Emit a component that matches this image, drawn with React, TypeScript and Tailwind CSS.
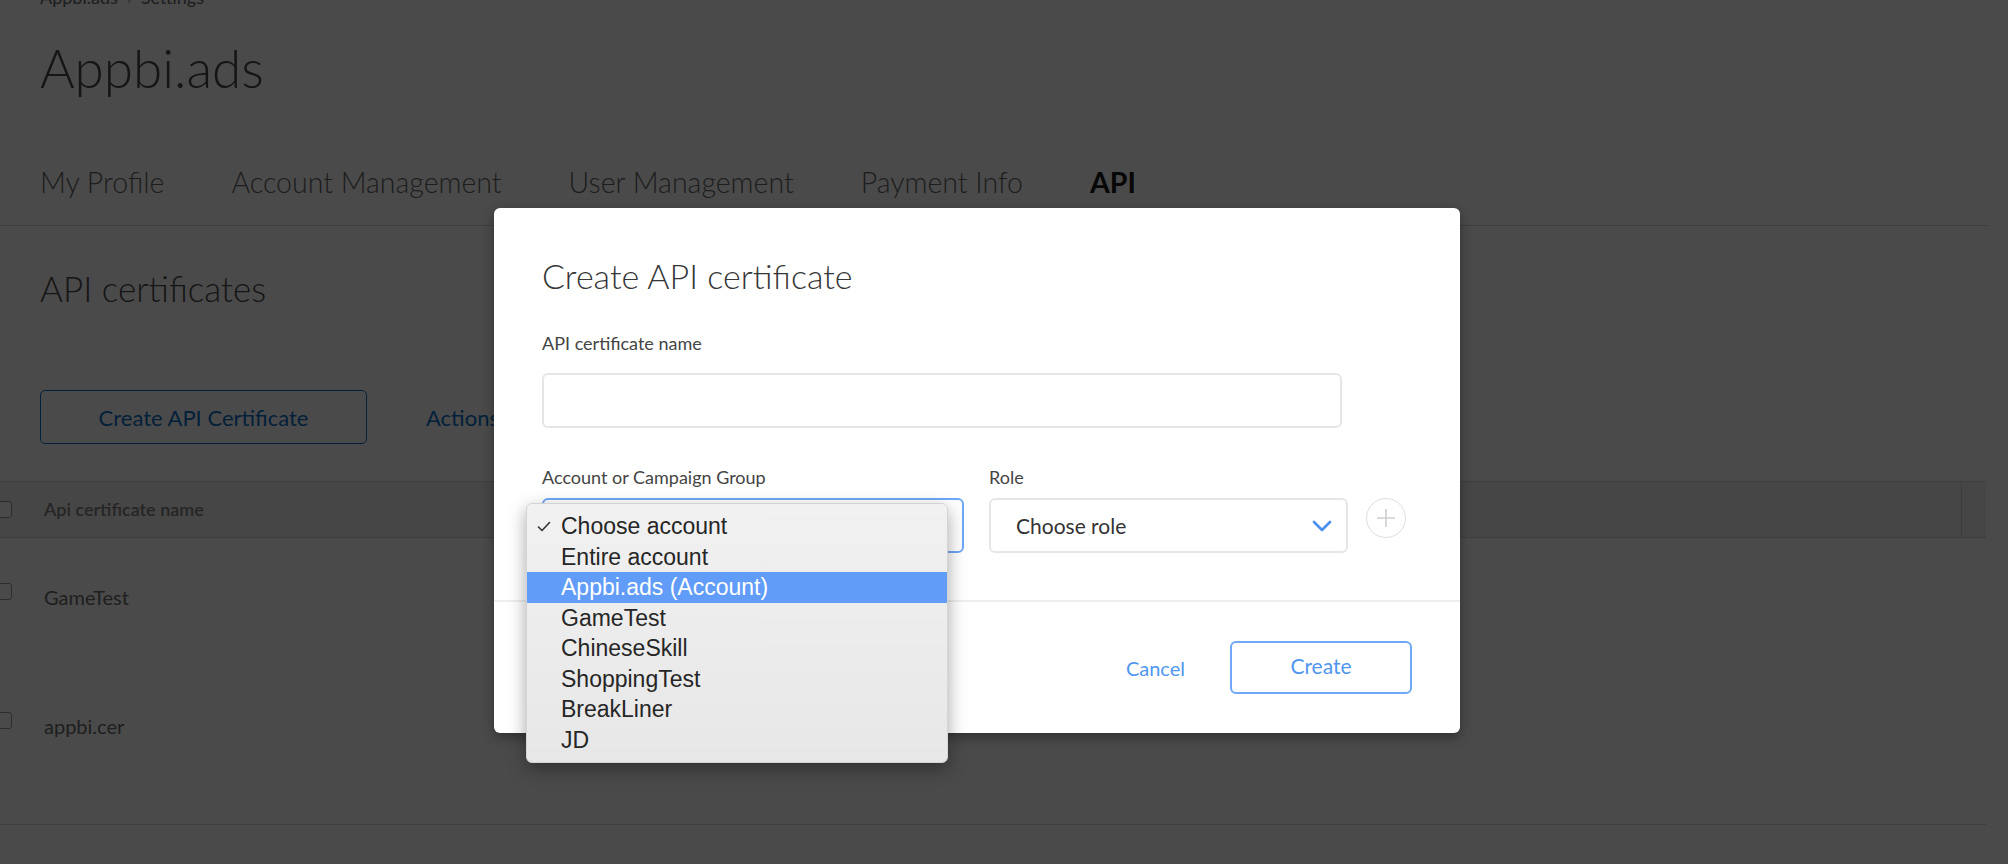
import React from 'react';

const tabs = ['My Profile', 'Account Management', 'User Management', 'Payment Info', 'API'];

const accountOptions = [
  'Choose account',
  'Entire account',
  'Appbi.ads (Account)',
  'GameTest',
  'ChineseSkill',
  'ShoppingTest',
  'BreakLiner',
  'JD',
];

const certificates = [
  { name: 'GameTest', rowClass: 'h-[129px]' },
  { name: 'appbi.cer', rowClass: 'h-[157px]' },
];

const Checkbox: React.FC = () => (
  <span className="block h-[17px] w-[17px] shrink-0 rounded-[3px] border border-[#999] bg-white" />
);

const Chevron: React.FC = () => (
  <svg width="20" height="12" viewBox="0 0 20 12" fill="none">
    <path d="M2 2 L10 10 L18 2" stroke="#4a8ff0" strokeWidth="2.6" strokeLinecap="round" strokeLinejoin="round" />
  </svg>
);

const AccountMenu: React.FC = () => (
  <ul className="absolute left-[-16px] top-[38px] z-10 w-[422px] rounded-[6px] border border-[#d4d4d4] bg-linear-to-b from-[#f1f1f1] to-[#e7e7e7] py-[7px] font-['Liberation_Sans',sans-serif] text-[23px] text-[#262626] shadow-[0_6px_18px_rgba(0,0,0,0.35)]">
    {accountOptions.map((opt, index) => (
      <li
        key={opt}
        className={`relative h-[30.5px] pl-[34px] leading-[30.5px] ${
          index === 2 ? 'bg-[#619cf8] text-white' : ''
        }`}
      >
        {index === 0 && (
          <svg className="absolute left-[10px] top-[10px]" width="14" height="11" viewBox="0 0 14 11" fill="none">
            <path d="M1.5 6 L5 9.5 L12.5 1.5" stroke="#333" strokeWidth="1.6" strokeLinecap="round" strokeLinejoin="round" />
          </svg>
        )}
        {opt}
      </li>
    ))}
  </ul>
);

const CreateCertificateModal: React.FC = () => (
  <div className="absolute left-[494px] top-[208px] z-20 h-[525px] w-[966px] rounded-[6px] bg-white shadow-[0_4px_12px_rgba(0,0,0,0.35)]">
    <div className="px-[48px] pt-[48px]">
      <h2 className="text-[34px] font-light leading-[40px] text-[#363636]">Create API certificate</h2>

      <label className="mt-[35px] block text-[18px] leading-6 text-[#444]">API certificate name</label>
      <input
        type="text"
        className="mt-[18px] block h-[55px] w-[800px] rounded-[6px] border-2 border-[#e6e6e6] bg-white px-4 outline-none"
      />

      <div className="mt-[37px] flex gap-[25px]">
        <div className="relative w-[422px]">
          <div className="text-[18px] leading-6 text-[#444]">Account or Campaign Group</div>
          <div className="mt-[9px] flex h-[55px] items-center rounded-[6px] border-2 border-[#6ea8f7] pl-[25px] text-[21px] text-[#333]">
            Choose account
          </div>
          <AccountMenu />
        </div>

        <div className="w-[359px]">
          <div className="text-[18px] leading-6 text-[#444]">Role</div>
          <div className="mt-[9px] flex h-[55px] items-center justify-between rounded-[6px] border-2 border-[#e6e6e6] pl-[25px] pr-[14px] text-[21px] text-[#333]">
            <span>Choose role</span>
            <Chevron />
          </div>
        </div>

        <div className="ml-[-7px] pt-[33px]">
          <button className="flex h-[40px] w-[40px] items-center justify-center rounded-full border-[1.5px] border-[#dedede]">
            <svg width="20" height="20" viewBox="0 0 20 20" fill="none">
              <path d="M10 1 V19 M1 10 H19" stroke="#cfcfcf" strokeWidth="1.6" />
            </svg>
          </button>
        </div>
      </div>
    </div>

    <div className="mt-[47px] h-[2px] bg-[#eeeeee]" />

    <div className="flex h-[131px] items-center justify-end gap-[45px] px-[48px]">
      <button className="text-[20px] text-[#5096f0]">Cancel</button>
      <button className="h-[53px] w-[182px] rounded-[6px] border-2 border-[#6ea8f7] pb-[3px] text-[21px] text-[#5096f0]">
        Create
      </button>
    </div>
  </div>
);

const App: React.FC = () => {
  return (
    <div className="relative h-[864px] w-[2008px] overflow-hidden bg-white font-['Lato',sans-serif]">
      <div className="w-[1988px]">
        <div className="px-10">
          <div className="mt-[-15px] flex items-center gap-[9px] text-[18px] leading-6 text-[#666]">
            <span>Appbi.ads</span>
            <span className="text-[#999]">›</span>
            <span>Settings</span>
          </div>
          <h1 className="mt-[29px] text-[53px] font-light leading-[60px] text-[#4a4a4a]">Appbi.ads</h1>
          <nav className="mt-[67px] flex gap-[67px] pb-[26px] text-[28.5px] font-light leading-[34px] text-[#666]">
            {tabs.map((tab) => (
              <span key={tab} className={tab === 'API' ? 'font-bold text-[#1a1a1a]' : ''}>
                {tab}
              </span>
            ))}
          </nav>
        </div>
        <div className="h-px bg-[#d6d6d6]" />

        <div className="px-10">
          <h2 className="mt-[40px] text-[35px] font-light leading-[44px] text-[#4a4a4a]">API certificates</h2>
          <div className="mt-[80px] flex items-center gap-[59px]">
            <button className="h-[54px] w-[327px] rounded-[5px] border-[1.5px] border-[#0a70c9] text-[22px] text-[#0a70c9]">
              Create API Certificate
            </button>
            <span className="text-[22px] text-[#0a70c9]">Actions</span>
          </div>
        </div>

        <div className="ml-[-6px] mt-[37px] w-[1992px]">
          <div className="flex h-[57px] items-center border-y border-[#d6d6d6] bg-[#f2f2f2]">
            <div className="ml-px"><Checkbox /></div>
            <div className="ml-[32px] flex-1 text-[18px] font-semibold text-[#808080]">Api certificate name</div>
            <div className="h-full w-[25px] border-l border-[#d6d6d6]" />
          </div>
          {certificates.map((cert) => (
            <div key={cert.name} className={`flex items-start pt-[45px] ${cert.rowClass}`}>
              <div className="ml-px"><Checkbox /></div>
              <div className="ml-[32px] mt-[2px] text-[20px] leading-6 text-[#6a6a6a]">{cert.name}</div>
            </div>
          ))}
          <div className="h-px bg-[#d6d6d6]" />
        </div>
      </div>

      <div className="absolute inset-0 z-10 bg-black/[0.71]" />
      <CreateCertificateModal />
    </div>
  );
};

export default App;
